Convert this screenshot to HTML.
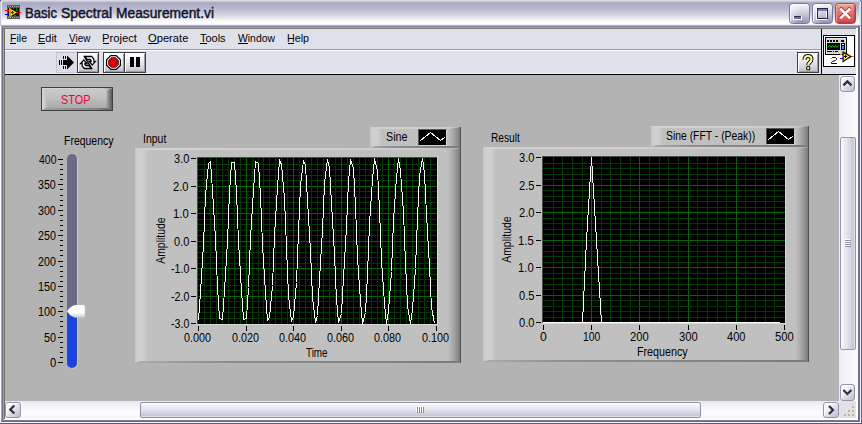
<!DOCTYPE html>
<html><head><meta charset="utf-8"><title>Basic Spectral Measurement.vi</title>
<style>
html,body{margin:0;padding:0;}
body{width:862px;height:424px;position:relative;overflow:hidden;background:#b3b3b3;font-family:"Liberation Sans",sans-serif;}
.t{position:absolute;white-space:nowrap;transform-origin:0 0;line-height:normal;}
div,svg{position:absolute;}
</style></head><body>

<div style="position:absolute;left:5px;top:75px;width:834px;height:326px;background:#b3b3b3;"></div>
<div style="left:0;top:0;width:862px;height:29px;background:linear-gradient(to bottom,#e4e4ec 0px,#d2d2e0 1px,#b6b6cc 2px,#a8a8c2 3px,#ababc4 4px,#b0b0c8 6px,#babace 9px,#c7c7d7 12px,#d6d6e2 15px,#e6e6ee 18px,#f4f4f8 20px,#ffffff 22px,#ffffff 24px,#e2e2ec 25px,#8a8aa8 26px,#76769a 27px,#a0a0a4 27.5px,#7e7e74 28px,#7e7e74 29px);"></div>
<div style="position:absolute;left:0px;top:2px;width:1px;height:24px;background:#c8c8dc;"></div>
<div style="position:absolute;left:1px;top:1px;width:1px;height:24px;background:#ececf4;"></div>
<div style="position:absolute;left:0px;top:0px;width:1px;height:1px;background:#5c5c88;"></div>
<div style="position:absolute;left:1px;top:0px;width:1px;height:1px;background:#a8a8c4;"></div>
<div style="position:absolute;left:0px;top:1px;width:1px;height:1px;background:#a8a8c4;"></div>
<div style="position:absolute;left:861px;top:2px;width:1px;height:24px;background:#6c6c92;"></div>
<div style="position:absolute;left:860px;top:1px;width:1px;height:24px;background:#e6e6f0;"></div>
<div style="position:absolute;left:859px;top:2px;width:1px;height:22px;background:linear-gradient(to bottom,#d0d0e0,#e8e8f0);"></div>
<div style="position:absolute;left:861px;top:0px;width:1px;height:1px;background:#7ab0f0;"></div>
<div style="position:absolute;left:860px;top:0px;width:1px;height:1px;background:#56649c;"></div>
<div style="position:absolute;left:861px;top:1px;width:1px;height:1px;background:#56649c;"></div>
<svg style="left:5px;top:5px" width="17" height="15" viewBox="0 0 17 15" shape-rendering="crispEdges">
<rect x="2" y="0" width="13" height="14" fill="#5a5a5a"/>
<g fill="#a4a4a4"><rect x="3" y="1" width="1" height="1"/><rect x="5" y="1" width="1" height="1"/><rect x="7" y="1" width="1" height="1"/><rect x="9" y="1" width="1" height="1"/><rect x="11" y="1" width="1" height="1"/><rect x="13" y="1" width="1" height="1"/>
<rect x="3" y="12" width="1" height="1"/><rect x="5" y="12" width="1" height="1"/><rect x="7" y="12" width="1" height="1"/><rect x="9" y="12" width="1" height="1"/><rect x="11" y="12" width="1" height="1"/><rect x="13" y="12" width="1" height="1"/></g>
<rect x="3" y="3" width="11" height="8" fill="#101010"/>
<rect x="8" y="3" width="1" height="1" fill="#008800"/><rect x="11" y="3" width="1" height="3" fill="#007000"/><rect x="12" y="4" width="1" height="2" fill="#007000"/><rect x="9" y="10" width="2" height="1" fill="#008800"/><rect x="12" y="9" width="1" height="1" fill="#007000"/>
<rect x="0" y="5" width="4" height="1" fill="#ff0000"/><rect x="0" y="9" width="4" height="1" fill="#0000ff"/><rect x="12" y="7" width="4" height="1" fill="#ff0000"/>
<polygon points="4,3 4,12 12,7.5" fill="#ffd800" shape-rendering="auto"/>
<polygon points="4,3 6,3.5 6,11.5 4,12" fill="#e8a000" shape-rendering="auto"/>
<rect x="7" y="6" width="1" height="3" fill="#303030"/><rect x="6" y="7" width="3" height="1" fill="#303030"/>
</svg>
<span class="t" style="left:24.63px;top:6.11px;font-size:13.8px;font-weight:normal;color:#14142a;transform:scaleX(0.9470);-webkit-text-stroke:0.45px #14142a;">Basic</span>
<span class="t" style="left:60.57px;top:6.11px;font-size:13.8px;font-weight:normal;color:#14142a;transform:scaleX(1.0104);-webkit-text-stroke:0.45px #14142a;">Spectral</span>
<span class="t" style="left:115.88px;top:6.11px;font-size:13.8px;font-weight:normal;color:#14142a;transform:scaleX(0.9981);-webkit-text-stroke:0.45px #14142a;">Measurement.vi</span>
<div style="left:789px;top:3px;width:19px;height:19px;border:1px solid #727a9e;border-radius:3.5px;background:linear-gradient(100deg,rgba(255,255,255,.55) 0%,rgba(255,255,255,0) 55%),linear-gradient(to bottom,#f6f6fb 0px,#e0e0ec 5px,#c2c2d8 11px,#a2a2c0 16px,#9494b6 19px);box-shadow:inset 1px 1px 0 rgba(255,255,255,.9);"></div>
<div style="left:812px;top:3px;width:19px;height:19px;border:1px solid #727a9e;border-radius:3.5px;background:linear-gradient(100deg,rgba(255,255,255,.55) 0%,rgba(255,255,255,0) 55%),linear-gradient(to bottom,#f6f6fb 0px,#e0e0ec 5px,#c2c2d8 11px,#a2a2c0 16px,#9494b6 19px);box-shadow:inset 1px 1px 0 rgba(255,255,255,.9);"></div>
<div style="left:835px;top:3px;width:19px;height:19px;border:1px solid #b83c46;border-radius:3.5px;background:linear-gradient(to bottom,#f8d8a8 0px,#f0a090 1.5px,#ec8484 4px,#e47070 9px,#d85858 15px,#cc4c4c 19px);box-shadow:inset 1px 0 0 rgba(255,190,170,.55),inset -1px -1px 0 rgba(170,40,40,.5);"></div>
<div style="position:absolute;left:793px;top:16px;width:9px;height:4px;background:#ffffff;"></div>
<div style="position:absolute;left:794px;top:16px;width:7px;height:3px;background:#6e6e96;"></div>
<div style="position:absolute;left:794px;top:16px;width:7px;height:1px;background:#2e2e4c;"></div>
<div style="left:816px;top:9px;width:9px;height:9px;border:1px solid #fff;"></div>
<div style="left:817px;top:8px;width:9px;height:9px;border:1px solid #26263e;background:linear-gradient(to bottom,#7c7ca6 0px,#7c7ca6 2px,rgba(0,0,0,0) 2px);"></div>
<svg style="left:835px;top:3px" width="21" height="21" viewBox="0 0 21 21">
<path d="M5.3 4.6 L15.2 14.5 M15.2 4.6 L5.3 14.5" stroke="#6a1c1c" stroke-width="2.6" fill="none" stroke-linecap="butt"/>
<path d="M5.3 5.5 L15.2 15.4 M15.2 5.5 L5.3 15.4" stroke="#fff" stroke-width="2.5" fill="none" stroke-linecap="butt"/></svg>
<div style="position:absolute;left:5px;top:29px;width:852px;height:45px;background:#dfe1ea;"></div>
<div style="position:absolute;left:5px;top:49px;width:816px;height:1px;background:#9c9ca0;"></div>
<div style="position:absolute;left:5px;top:50px;width:816px;height:1px;background:#ffffff;"></div>
<div style="position:absolute;left:5px;top:73px;width:816px;height:1px;background:#f2f2f8;"></div>
<div style="position:absolute;left:5px;top:74px;width:852px;height:1px;background:#000000;"></div>
<div style="position:absolute;left:821px;top:29px;width:1px;height:45px;background:#000000;"></div>
<span class="t" style="left:9.75px;top:31.30px;font-size:11.6px;font-weight:normal;color:#000;transform:scaleX(0.9101);">File</span>
<div style="position:absolute;left:10.3px;top:43px;width:6.0px;height:1px;background:#000;"></div>
<span class="t" style="left:37.71px;top:31.30px;font-size:11.6px;font-weight:normal;color:#000;transform:scaleX(0.9443);">Edit</span>
<div style="position:absolute;left:38.3px;top:43px;width:6.8px;height:1px;background:#000;"></div>
<span class="t" style="left:68.65px;top:31.30px;font-size:11.6px;font-weight:normal;color:#000;transform:scaleX(0.8541);">View</span>
<div style="position:absolute;left:68.4px;top:43px;width:7.3px;height:1px;background:#000;"></div>
<span class="t" style="left:101.89px;top:31.30px;font-size:11.6px;font-weight:normal;color:#000;transform:scaleX(0.9663);">Project</span>
<div style="position:absolute;left:102.5px;top:43px;width:6.8px;height:1px;background:#000;"></div>
<span class="t" style="left:148.21px;top:31.30px;font-size:11.6px;font-weight:normal;color:#000;transform:scaleX(0.9637);">Operate</span>
<div style="position:absolute;left:148.4px;top:43px;width:8.4px;height:1px;background:#000;"></div>
<span class="t" style="left:200.16px;top:31.30px;font-size:11.6px;font-weight:normal;color:#000;transform:scaleX(0.9434);">Tools</span>
<div style="position:absolute;left:200.1px;top:43px;width:7.0px;height:1px;background:#000;"></div>
<span class="t" style="left:237.94px;top:31.30px;font-size:11.6px;font-weight:normal;color:#000;transform:scaleX(0.8956);">Window</span>
<div style="position:absolute;left:237.7px;top:43px;width:10.5px;height:1px;background:#000;"></div>
<span class="t" style="left:287.03px;top:31.30px;font-size:11.6px;font-weight:normal;color:#000;transform:scaleX(0.9244);">Help</span>
<div style="position:absolute;left:287.6px;top:43px;width:6.8px;height:1px;background:#000;"></div>
<div style="left:56px;top:52px;width:20px;height:19px;border:1px solid #c6c7d2;background:#dcdde7;"></div>
<svg style="left:56px;top:52px" width="22" height="21" viewBox="56 52 22 21" shape-rendering="crispEdges">
<polygon points="67,55.5 74,62.5 67,69.5" fill="#000" shape-rendering="auto"/>
<rect x="63" y="60" width="5" height="5" fill="#000"/>
<rect x="59" y="60" width="1" height="5" fill="#000"/><rect x="61" y="60" width="1" height="5" fill="#000"/>
<rect x="63" y="56" width="1" height="3" fill="#000"/><rect x="65" y="56" width="1" height="3" fill="#000"/>
<rect x="63" y="66" width="1" height="3" fill="#000"/><rect x="65" y="66" width="1" height="3" fill="#000"/>
</svg>
<div style="left:77px;top:52px;width:20px;height:19px;border:1px solid #404044;background:linear-gradient(to bottom,#ffffff 0px,#f6f6fa 4px,#e6e6ee 10px,#d0d0da 16px,#b8b8c4 19px);box-shadow:inset 1px 1px 0 #ffffff,inset -1px -1px 0 #9a9aa6;"></div>
<svg style="left:77px;top:52px" width="22" height="21" viewBox="77 52 22 21">
<g stroke="#000" stroke-width="1.3" fill="#fff" stroke-linejoin="miter" transform="translate(88 0) scale(0.9 1) translate(-88 0)">
<path d="M84.5 56.5 L92 56.5 L94.5 59 L94.5 61.5 L96.2 61.5 L92.7 65 L89.2 61.5 L91.5 61.5 L91.5 60.5 L90.5 59.5 L87 59.5 Z"/>
<path d="M91.5 68.5 L84 68.5 L81.5 66 L81.5 63.5 L79.8 63.5 L83.3 60 L86.8 63.5 L84.5 63.5 L84.5 64.5 L85.5 65.5 L89 65.5 Z"/>
</g>
<path d="M84 56 L92 69" stroke="#000" stroke-width="1.4"/>
</svg>
<div style="left:103px;top:52px;width:20px;height:19px;border:1px solid #404044;background:linear-gradient(to bottom,#ffffff 0px,#f6f6fa 4px,#e6e6ee 10px,#d0d0da 16px,#b8b8c4 19px);box-shadow:inset 1px 1px 0 #ffffff,inset -1px -1px 0 #9a9aa6;"></div>
<svg style="left:103px;top:52px" width="22" height="21" viewBox="103 52 22 21">
<polygon points="110.5,55 116.5,55 121,59.5 121,65.5 116.5,70 110.5,70 106,65.5 106,59.5" fill="#000"/>
<polygon points="111,56.2 116,56.2 119.8,60 119.8,65 116,68.8 111,68.8 107.2,65 107.2,60" fill="#fff"/>
<polygon points="111.4,57.2 115.6,57.2 118.8,60.4 118.8,64.6 115.6,67.8 111.4,67.8 108.2,64.6 108.2,60.4" fill="#400000"/>
<polygon points="111.7,58 115.3,58 118,60.7 118,64.3 115.3,67 111.7,67 109,64.3 109,60.7" fill="#e00000"/>
</svg>
<div style="left:124px;top:52px;width:20px;height:19px;border:1px solid #404044;background:linear-gradient(to bottom,#ffffff 0px,#f6f6fa 4px,#e6e6ee 10px,#d0d0da 16px,#b8b8c4 19px);box-shadow:inset 1px 1px 0 #ffffff,inset -1px -1px 0 #9a9aa6;"></div>
<div style="position:absolute;left:130px;top:57px;width:4px;height:10px;background:#000;"></div>
<div style="position:absolute;left:136px;top:57px;width:4px;height:10px;background:#000;"></div>
<div style="left:797px;top:52px;width:20px;height:19px;border:1px solid #404044;background:linear-gradient(to bottom,#ffffff 0px,#f2f2f6 5px,#dcdce4 12px,#c0c0ca 19px);box-shadow:inset 1px 1px 0 #ffffff,inset -1px -1px 0 #9a9aa6;"></div>
<svg style="left:797px;top:52px" width="22" height="21" viewBox="797 52 22 21">
<path d="M804.5 60 Q804.5 56 808 56 Q811.5 56 811.5 59.3 Q811.5 61.3 809.6 62.6 Q808.2 63.6 808.2 65.2" stroke="#000" stroke-width="3.9" fill="none"/>
<path d="M804.5 60 Q804.5 56 808 56 Q811.5 56 811.5 59.3 Q811.5 61.3 809.6 62.6 Q808.2 63.6 808.2 65.2" stroke="#ffff88" stroke-width="2.1" fill="none"/>
<rect x="806.3" y="66.3" width="3.9" height="3.9" rx="0.8" fill="#000"/><rect x="807.2" y="67.2" width="2.1" height="2.1" fill="#ffff88"/>
</svg>
<div style="left:823px;top:35px;width:30px;height:30px;border:1px solid #000;background:#fff;"></div>
<svg style="left:823px;top:35px" width="32" height="32" viewBox="823 35 32 32" shape-rendering="crispEdges">
<rect x="825" y="37" width="22" height="18" fill="#000"/>
<rect x="826" y="38" width="20" height="16" fill="#d2d2d2"/>
<rect x="826" y="38" width="20" height="1" fill="#e8e8e8"/><rect x="826" y="38" width="1" height="16" fill="#e8e8e8"/>
<g fill="#000"><rect x="827" y="40" width="2" height="2"/><rect x="830" y="40" width="2" height="2"/><rect x="833" y="40" width="2" height="2"/><rect x="836" y="40" width="2" height="2"/><rect x="841" y="40" width="3" height="2"/>
<rect x="827" y="43" width="13" height="7"/><rect x="841" y="43" width="4" height="7"/>
<rect x="827" y="51" width="5" height="1"/><rect x="833" y="51" width="1" height="1"/><rect x="835" y="51" width="3" height="1"/></g>
<polyline points="828,47 829.5,45.5 831,47.5 832.5,45.5 834,47.5 835.5,45.5 837,47.5 838.5,45.5" stroke="#00c800" stroke-width="1" fill="none" shape-rendering="auto"/>
<rect x="842" y="44" width="2" height="1" fill="#fff"/><rect x="842" y="46" width="2" height="3" fill="#2090ff"/>
<rect x="840" y="54" width="2" height="1" fill="#ff6030"/><rect x="851" y="56" width="3" height="1" fill="#ff6030"/><rect x="840" y="58" width="3" height="1" fill="#0000ff"/>
<polygon points="842.5,51 842.5,62.5 852,56.5" fill="#000" shape-rendering="auto"/>
<polygon points="843.6,53.2 843.6,60.4 849.8,56.5" fill="#ffee00" shape-rendering="auto"/>
<rect x="845" y="55" width="1" height="3" fill="#000"/><rect x="844" y="56" width="3" height="1" fill="#000"/>
<path d="M831.5 58.5 L832.5 57.5 L835.5 57.5 L836.5 58.5 L836.5 59.5 L835.5 60.5 L832.5 61.5 L831.5 62.5 L831.5 63.5 L836.9 63.5" stroke="#000" stroke-width="1" fill="none" shape-rendering="auto"/>
</svg>
<div style="position:absolute;left:0px;top:26px;width:1px;height:396px;background:#ffffff;"></div>
<div style="position:absolute;left:1px;top:26px;width:1px;height:396px;background:#a6a6c2;"></div>
<div style="position:absolute;left:2px;top:26px;width:1px;height:396px;background:#72728c;"></div>
<div style="position:absolute;left:3px;top:28px;width:1px;height:390px;background:#9e9e9e;"></div>
<div style="position:absolute;left:4px;top:28px;width:1px;height:390px;background:#727264;"></div>
<div style="position:absolute;left:856px;top:28px;width:2px;height:392px;background:#fdfdf2;"></div>
<div style="position:absolute;left:858px;top:26px;width:2px;height:396px;background:#6c6c8c;"></div>
<div style="position:absolute;left:860px;top:26px;width:1px;height:397px;background:#f4f4fa;"></div>
<div style="position:absolute;left:861px;top:26px;width:1px;height:398px;background:#5c5c7c;"></div>
<div style="position:absolute;left:3px;top:418px;width:855px;height:2px;background:#fdfdf6;"></div>
<div style="position:absolute;left:1px;top:420px;width:859px;height:1px;background:#7a7a98;"></div>
<div style="position:absolute;left:1px;top:421px;width:859px;height:1px;background:#6a6a8a;"></div>
<div style="position:absolute;left:0px;top:422px;width:861px;height:1px;background:#f4f4fa;"></div>
<div style="position:absolute;left:0px;top:423px;width:862px;height:1px;background:#5c5c7c;"></div>
<div style="position:absolute;left:3px;top:418px;width:1px;height:2px;background:#9e9e9e;"></div>
<div style="position:absolute;left:4px;top:418px;width:1px;height:1px;background:#727264;"></div>
<div style="position:absolute;left:5px;top:401px;width:834px;height:17px;background:linear-gradient(to bottom,#e6e6ee 0px,#f2f2f8 4px,#fcfcfe 12px,#f4f4f8 17px);"></div>
<div style="position:absolute;left:839px;top:75px;width:17px;height:326px;background:linear-gradient(to right,#ebebf3 0px,#f4f4f8 8px,#fbfbfd 17px);"></div>
<div style="position:absolute;left:839px;top:401px;width:17px;height:17px;background:#e2e1e6;"></div>
<div style="left:5.2px;top:402px;width:14px;height:14px;border:1px solid #9294b0;border-radius:3px;background:linear-gradient(135deg,#ffffff 0%,#f0f0f6 35%,#d2d2e2 70%,#bcbcd2 100%);box-shadow:inset 1px 1px 0 #fff;"></div>
<div style="left:822.5px;top:402px;width:14px;height:14px;border:1px solid #9294b0;border-radius:3px;background:linear-gradient(135deg,#ffffff 0%,#f0f0f6 35%,#d2d2e2 70%,#bcbcd2 100%);box-shadow:inset 1px 1px 0 #fff;"></div>
<div style="left:840px;top:75.6px;width:13px;height:14px;border:1px solid #9294b0;border-radius:3px;background:linear-gradient(135deg,#ffffff 0%,#f0f0f6 35%,#d2d2e2 70%,#bcbcd2 100%);box-shadow:inset 1px 1px 0 #fff;"></div>
<div style="left:840px;top:384px;width:13px;height:15px;border:1px solid #9294b0;border-radius:3px;background:linear-gradient(135deg,#ffffff 0%,#f0f0f6 35%,#d2d2e2 70%,#bcbcd2 100%);box-shadow:inset 1px 1px 0 #fff;"></div>
<svg style="left:0;top:0" width="862" height="424" viewBox="0 0 862 424"><path d="M14.3 405.5 L10.3 409.5 L14.3 413.5" stroke="#303030" stroke-width="2.2" fill="none"/></svg>
<svg style="left:0;top:0" width="862" height="424" viewBox="0 0 862 424"><path d="M829 406 L833 410 L829 414" stroke="#303030" stroke-width="2.2" fill="none"/></svg>
<svg style="left:0;top:0" width="862" height="424" viewBox="0 0 862 424"><path d="M843.4 85.4 L847.4 81.4 L851.4 85.4" stroke="#303030" stroke-width="2.2" fill="none"/></svg>
<svg style="left:0;top:0" width="862" height="424" viewBox="0 0 862 424"><path d="M843.4 390 L847.4 394 L851.4 390" stroke="#303030" stroke-width="2.2" fill="none"/></svg>
<div style="position:absolute;left:140px;top:401px;width:561px;height:1px;background:#f4f4ea;"></div>
<div style="left:140px;top:402px;width:559px;height:14px;border:1px solid #8e90a8;border-radius:2px;background:linear-gradient(to bottom,#ffffff 0px,#f2f2f6 2px,#e6e6ee 6px,#d0d0e0 11px,#c6c6da 13px,#ffffff 14px);"></div>
<div style="position:absolute;left:416px;top:406px;width:1px;height:6px;background:#ffffff;"></div>
<div style="position:absolute;left:417px;top:407px;width:1px;height:6px;background:#8c8ea8;"></div>
<div style="position:absolute;left:418px;top:406px;width:1px;height:6px;background:#ffffff;"></div>
<div style="position:absolute;left:419px;top:407px;width:1px;height:6px;background:#8c8ea8;"></div>
<div style="position:absolute;left:420px;top:406px;width:1px;height:6px;background:#ffffff;"></div>
<div style="position:absolute;left:421px;top:407px;width:1px;height:6px;background:#8c8ea8;"></div>
<div style="position:absolute;left:422px;top:406px;width:1px;height:6px;background:#ffffff;"></div>
<div style="position:absolute;left:423px;top:407px;width:1px;height:6px;background:#8c8ea8;"></div>
<div style="position:absolute;left:839px;top:137px;width:1px;height:213px;background:#f4f4ea;"></div>
<div style="position:absolute;left:856px;top:75px;width:1px;height:326px;background:#f8f8ee;"></div>
<div style="left:840px;top:137px;width:14px;height:211px;border:1px solid #9294ae;border-radius:2px;background:linear-gradient(to right,#ffffff 0px,#f0f0f5 2px,#e4e4ec 6px,#ccccdc 11px,#c6c6da 13px,#fff 14px);"></div>
<div style="position:absolute;left:844px;top:239px;width:6px;height:1px;background:#ffffff;"></div>
<div style="position:absolute;left:845px;top:240px;width:6px;height:1px;background:#8c8ea8;"></div>
<div style="position:absolute;left:844px;top:241px;width:6px;height:1px;background:#ffffff;"></div>
<div style="position:absolute;left:845px;top:242px;width:6px;height:1px;background:#8c8ea8;"></div>
<div style="position:absolute;left:844px;top:243px;width:6px;height:1px;background:#ffffff;"></div>
<div style="position:absolute;left:845px;top:244px;width:6px;height:1px;background:#8c8ea8;"></div>
<div style="position:absolute;left:844px;top:245px;width:6px;height:1px;background:#ffffff;"></div>
<div style="position:absolute;left:845px;top:246px;width:6px;height:1px;background:#8c8ea8;"></div>
<div style="position:absolute;left:852px;top:406px;width:2px;height:2px;background:#b8b49c;"></div>
<div style="position:absolute;left:848px;top:410px;width:2px;height:2px;background:#b8b49c;"></div>
<div style="position:absolute;left:852px;top:410px;width:2px;height:2px;background:#b8b49c;"></div>
<div style="position:absolute;left:844px;top:414px;width:2px;height:2px;background:#b8b49c;"></div>
<div style="position:absolute;left:848px;top:414px;width:2px;height:2px;background:#b8b49c;"></div>
<div style="position:absolute;left:852px;top:414px;width:2px;height:2px;background:#b8b49c;"></div>
<div style="left:41px;top:87px;width:70px;height:22px;border:1px solid #404040;background:linear-gradient(to bottom,#cacaca 0px,#c2c2c2 8px,#b2b2b2 16px,#a8a8a8 22px);"></div>
<div style="position:absolute;left:42px;top:88px;width:5px;height:22px;background:linear-gradient(to right,#d8d8d8,#c6c6c6 70%,rgba(198,198,198,0));clip-path:polygon(0 0,100% 14%,100% 90%,0 100%);"></div>
<div style="position:absolute;left:106px;top:88px;width:6px;height:22px;background:linear-gradient(to right,rgba(170,170,170,0),#8c8c8c 40%,#5a5a5a);clip-path:polygon(100% 0,0 14%,0 90%,100% 100%);"></div>
<div style="position:absolute;left:42px;top:88px;width:70px;height:1px;background:linear-gradient(to right,#d8d8d8,#cccccc 85%,#909090);"></div>
<div style="position:absolute;left:42px;top:108px;width:70px;height:2px;background:linear-gradient(to right,#a0a0a0,#808080 80%,#606060);clip-path:polygon(0 100%,100% 100%,93% 0,6% 0);"></div>
<span class="t" style="left:61.43px;top:92.23px;font-size:13px;font-weight:normal;color:#f0003c;transform:scaleX(0.8398);">STOP</span>
<span class="t" style="left:63.53px;top:133.02px;font-size:12.8px;font-weight:normal;color:#000;transform:scaleX(0.8177);">Frequency</span>
<div style="left:67px;top:154px;width:10px;height:214px;border-radius:5px;background:linear-gradient(to bottom,#6b6b86 0px,#6b6b86 157px,#1c44e0 157px,#1c44e0 214px);box-shadow:1px 1px 0 #c8c8c8;"></div>
<div style="position:absolute;left:58px;top:362px;width:5px;height:1px;background:#000;"></div>
<div style="position:absolute;left:60px;top:357px;width:3px;height:1px;background:#000;"></div>
<div style="position:absolute;left:60px;top:352px;width:3px;height:1px;background:#000;"></div>
<div style="position:absolute;left:60px;top:347px;width:3px;height:1px;background:#000;"></div>
<div style="position:absolute;left:60px;top:342px;width:3px;height:1px;background:#000;"></div>
<div style="position:absolute;left:58px;top:337px;width:5px;height:1px;background:#000;"></div>
<div style="position:absolute;left:60px;top:332px;width:3px;height:1px;background:#000;"></div>
<div style="position:absolute;left:60px;top:326px;width:3px;height:1px;background:#000;"></div>
<div style="position:absolute;left:60px;top:321px;width:3px;height:1px;background:#000;"></div>
<div style="position:absolute;left:60px;top:316px;width:3px;height:1px;background:#000;"></div>
<div style="position:absolute;left:58px;top:311px;width:5px;height:1px;background:#000;"></div>
<div style="position:absolute;left:60px;top:306px;width:3px;height:1px;background:#000;"></div>
<div style="position:absolute;left:60px;top:301px;width:3px;height:1px;background:#000;"></div>
<div style="position:absolute;left:60px;top:296px;width:3px;height:1px;background:#000;"></div>
<div style="position:absolute;left:60px;top:291px;width:3px;height:1px;background:#000;"></div>
<div style="position:absolute;left:58px;top:286px;width:5px;height:1px;background:#000;"></div>
<div style="position:absolute;left:60px;top:281px;width:3px;height:1px;background:#000;"></div>
<div style="position:absolute;left:60px;top:276px;width:3px;height:1px;background:#000;"></div>
<div style="position:absolute;left:60px;top:271px;width:3px;height:1px;background:#000;"></div>
<div style="position:absolute;left:60px;top:266px;width:3px;height:1px;background:#000;"></div>
<div style="position:absolute;left:58px;top:261px;width:5px;height:1px;background:#000;"></div>
<div style="position:absolute;left:60px;top:255px;width:3px;height:1px;background:#000;"></div>
<div style="position:absolute;left:60px;top:250px;width:3px;height:1px;background:#000;"></div>
<div style="position:absolute;left:60px;top:245px;width:3px;height:1px;background:#000;"></div>
<div style="position:absolute;left:60px;top:240px;width:3px;height:1px;background:#000;"></div>
<div style="position:absolute;left:58px;top:235px;width:5px;height:1px;background:#000;"></div>
<div style="position:absolute;left:60px;top:230px;width:3px;height:1px;background:#000;"></div>
<div style="position:absolute;left:60px;top:225px;width:3px;height:1px;background:#000;"></div>
<div style="position:absolute;left:60px;top:220px;width:3px;height:1px;background:#000;"></div>
<div style="position:absolute;left:60px;top:215px;width:3px;height:1px;background:#000;"></div>
<div style="position:absolute;left:58px;top:210px;width:5px;height:1px;background:#000;"></div>
<div style="position:absolute;left:60px;top:205px;width:3px;height:1px;background:#000;"></div>
<div style="position:absolute;left:60px;top:200px;width:3px;height:1px;background:#000;"></div>
<div style="position:absolute;left:60px;top:195px;width:3px;height:1px;background:#000;"></div>
<div style="position:absolute;left:60px;top:189px;width:3px;height:1px;background:#000;"></div>
<div style="position:absolute;left:58px;top:184px;width:5px;height:1px;background:#000;"></div>
<div style="position:absolute;left:60px;top:179px;width:3px;height:1px;background:#000;"></div>
<div style="position:absolute;left:60px;top:174px;width:3px;height:1px;background:#000;"></div>
<div style="position:absolute;left:60px;top:169px;width:3px;height:1px;background:#000;"></div>
<div style="position:absolute;left:60px;top:164px;width:3px;height:1px;background:#000;"></div>
<div style="position:absolute;left:58px;top:159px;width:5px;height:1px;background:#000;"></div>
<span class="t" style="left:49.76px;top:354.82px;font-size:12.8px;font-weight:normal;color:#000;transform:scaleX(0.8816);">0</span>
<span class="t" style="left:43.98px;top:329.82px;font-size:12.8px;font-weight:normal;color:#000;transform:scaleX(0.8453);">50</span>
<span class="t" style="left:37.91px;top:303.82px;font-size:12.8px;font-weight:normal;color:#000;transform:scaleX(0.8476);">100</span>
<span class="t" style="left:37.91px;top:278.82px;font-size:12.8px;font-weight:normal;color:#000;transform:scaleX(0.8476);">150</span>
<span class="t" style="left:38.18px;top:253.82px;font-size:12.8px;font-weight:normal;color:#000;transform:scaleX(0.8346);">200</span>
<span class="t" style="left:38.18px;top:227.82px;font-size:12.8px;font-weight:normal;color:#000;transform:scaleX(0.8346);">250</span>
<span class="t" style="left:38.29px;top:202.82px;font-size:12.8px;font-weight:normal;color:#000;transform:scaleX(0.8294);">300</span>
<span class="t" style="left:38.29px;top:176.82px;font-size:12.8px;font-weight:normal;color:#000;transform:scaleX(0.8294);">350</span>
<span class="t" style="left:38.50px;top:151.82px;font-size:12.8px;font-weight:normal;color:#000;transform:scaleX(0.8194);">400</span>
<svg style="left:66px;top:304px" width="21" height="15" viewBox="66 304 21 15">
<defs><linearGradient id="tg" x1="0" y1="0" x2="0" y2="1"><stop offset="0" stop-color="#ffffff"/><stop offset="0.6" stop-color="#ffffff"/><stop offset="1" stop-color="#c8c8c8"/></linearGradient></defs>
<path d="M67 311.3 Q70 306.2 75.5 305 L83 305 Q84.9 305 84.9 307 L84.9 315.8 Q84.9 317.8 83 317.8 L75.5 317.8 Q70 316.4 67 311.3 Z" fill="url(#tg)"/>
</svg>
<div style="position:absolute;left:134.5px;top:148px;width:326.5px;height:215px;background:#c0c0c0;"></div><div style="position:absolute;left:134.5px;top:148px;width:12px;height:215px;background:linear-gradient(to right,#c6c6c6 0px,#d0d0d0 3px,#cecece 70%,#c4c4c4 100%);"></div><div style="position:absolute;left:448.0px;top:148px;width:13px;height:215px;background:linear-gradient(to right,#bebebe 0px,#b0b0b0 25%,#9c9c9c 55%,#868686 80%,#787878 100%);"></div><div style="position:absolute;left:460.0px;top:148px;width:1px;height:215px;background:#505050;"></div><div style="position:absolute;left:134.5px;top:148px;width:326.5px;height:2px;background:linear-gradient(to right,#d2d2d2 0px,#cccccc 90%,#b0b0b0 100%);clip-path:polygon(0 0,100% 0,313.5px 100%,4px 100%);"></div><div style="position:absolute;left:134.5px;top:361px;width:326.5px;height:2px;background:linear-gradient(to right,#acacac 0px,#8e8e8e 25%,#7c7c7c 100%);clip-path:polygon(0 100%,100% 100%,100% 0,6px 0);"></div><div style="position:absolute;left:460.0px;top:148px;width:1px;height:215px;background:#505050;"></div>
<div style="position:absolute;left:370px;top:127px;width:91px;height:21px;background:#c0c0c0;"></div><div style="position:absolute;left:370px;top:127px;width:11px;height:21px;background:linear-gradient(to right,#c6c6c6 0px,#d0d0d0 3px,#cecece 70%,#c4c4c4 100%);"></div><div style="position:absolute;left:448px;top:127px;width:13px;height:21px;background:linear-gradient(to right,#bebebe 0px,#b0b0b0 25%,#9c9c9c 55%,#868686 80%,#787878 100%);"></div><div style="position:absolute;left:460px;top:127px;width:1px;height:21px;background:#505050;"></div><div style="position:absolute;left:370px;top:127px;width:91px;height:2px;background:linear-gradient(to right,#d2d2d2 0px,#cccccc 90%,#b0b0b0 100%);clip-path:polygon(0 0,100% 0,78px 100%,3px 100%);"></div><div style="position:absolute;left:370px;top:146px;width:91px;height:2px;background:linear-gradient(to right,#acacac 0px,#8e8e8e 25%,#7c7c7c 100%);clip-path:polygon(0 100%,100% 100%,100% 0,5px 0);"></div><div style="position:absolute;left:460px;top:127px;width:1px;height:21px;background:#505050;"></div>
<div style="position:absolute;left:482.5px;top:147px;width:326.5px;height:215px;background:#c0c0c0;"></div><div style="position:absolute;left:482.5px;top:147px;width:12px;height:215px;background:linear-gradient(to right,#c6c6c6 0px,#d0d0d0 3px,#cecece 70%,#c4c4c4 100%);"></div><div style="position:absolute;left:796.0px;top:147px;width:13px;height:215px;background:linear-gradient(to right,#bebebe 0px,#b0b0b0 25%,#9c9c9c 55%,#868686 80%,#787878 100%);"></div><div style="position:absolute;left:808.0px;top:147px;width:1px;height:215px;background:#505050;"></div><div style="position:absolute;left:482.5px;top:147px;width:326.5px;height:2px;background:linear-gradient(to right,#d2d2d2 0px,#cccccc 90%,#b0b0b0 100%);clip-path:polygon(0 0,100% 0,313.5px 100%,4px 100%);"></div><div style="position:absolute;left:482.5px;top:360px;width:326.5px;height:2px;background:linear-gradient(to right,#acacac 0px,#8e8e8e 25%,#7c7c7c 100%);clip-path:polygon(0 100%,100% 100%,100% 0,6px 0);"></div><div style="position:absolute;left:808.0px;top:147px;width:1px;height:215px;background:#505050;"></div>
<div style="position:absolute;left:651px;top:126px;width:158px;height:21px;background:#c0c0c0;"></div><div style="position:absolute;left:651px;top:126px;width:11px;height:21px;background:linear-gradient(to right,#c6c6c6 0px,#d0d0d0 3px,#cecece 70%,#c4c4c4 100%);"></div><div style="position:absolute;left:796px;top:126px;width:13px;height:21px;background:linear-gradient(to right,#bebebe 0px,#b0b0b0 25%,#9c9c9c 55%,#868686 80%,#787878 100%);"></div><div style="position:absolute;left:808px;top:126px;width:1px;height:21px;background:#505050;"></div><div style="position:absolute;left:651px;top:126px;width:158px;height:2px;background:linear-gradient(to right,#d2d2d2 0px,#cccccc 90%,#b0b0b0 100%);clip-path:polygon(0 0,100% 0,145px 100%,3px 100%);"></div><div style="position:absolute;left:651px;top:145px;width:158px;height:2px;background:linear-gradient(to right,#acacac 0px,#8e8e8e 25%,#7c7c7c 100%);clip-path:polygon(0 100%,100% 100%,100% 0,5px 0);"></div><div style="position:absolute;left:808px;top:126px;width:1px;height:21px;background:#505050;"></div>
<svg style="left:197px;top:157px" width="241" height="167" viewBox="197 157 241 167" shape-rendering="crispEdges"><rect x="197" y="157" width="241" height="167" fill="#000"/><rect x="204" y="157" width="1" height="167" fill="#003a00"/><rect x="210" y="157" width="1" height="167" fill="#003a00"/><rect x="216" y="157" width="1" height="167" fill="#003a00"/><rect x="222" y="157" width="1" height="167" fill="#003a00"/><rect x="228" y="157" width="1" height="167" fill="#003a00"/><rect x="234" y="157" width="1" height="167" fill="#003a00"/><rect x="240" y="157" width="1" height="167" fill="#003a00"/><rect x="252" y="157" width="1" height="167" fill="#003a00"/><rect x="258" y="157" width="1" height="167" fill="#003a00"/><rect x="263" y="157" width="1" height="167" fill="#003a00"/><rect x="269" y="157" width="1" height="167" fill="#003a00"/><rect x="275" y="157" width="1" height="167" fill="#003a00"/><rect x="281" y="157" width="1" height="167" fill="#003a00"/><rect x="287" y="157" width="1" height="167" fill="#003a00"/><rect x="299" y="157" width="1" height="167" fill="#003a00"/><rect x="305" y="157" width="1" height="167" fill="#003a00"/><rect x="311" y="157" width="1" height="167" fill="#003a00"/><rect x="317" y="157" width="1" height="167" fill="#003a00"/><rect x="323" y="157" width="1" height="167" fill="#003a00"/><rect x="329" y="157" width="1" height="167" fill="#003a00"/><rect x="335" y="157" width="1" height="167" fill="#003a00"/><rect x="347" y="157" width="1" height="167" fill="#003a00"/><rect x="353" y="157" width="1" height="167" fill="#003a00"/><rect x="359" y="157" width="1" height="167" fill="#003a00"/><rect x="365" y="157" width="1" height="167" fill="#003a00"/><rect x="371" y="157" width="1" height="167" fill="#003a00"/><rect x="377" y="157" width="1" height="167" fill="#003a00"/><rect x="382" y="157" width="1" height="167" fill="#003a00"/><rect x="394" y="157" width="1" height="167" fill="#003a00"/><rect x="400" y="157" width="1" height="167" fill="#003a00"/><rect x="406" y="157" width="1" height="167" fill="#003a00"/><rect x="412" y="157" width="1" height="167" fill="#003a00"/><rect x="418" y="157" width="1" height="167" fill="#003a00"/><rect x="424" y="157" width="1" height="167" fill="#003a00"/><rect x="430" y="157" width="1" height="167" fill="#003a00"/><rect x="197" y="164" width="241" height="1" fill="#003a00"/><rect x="197" y="169" width="241" height="1" fill="#003a00"/><rect x="197" y="175" width="241" height="1" fill="#003a00"/><rect x="197" y="180" width="241" height="1" fill="#003a00"/><rect x="197" y="191" width="241" height="1" fill="#003a00"/><rect x="197" y="197" width="241" height="1" fill="#003a00"/><rect x="197" y="202" width="241" height="1" fill="#003a00"/><rect x="197" y="208" width="241" height="1" fill="#003a00"/><rect x="197" y="219" width="241" height="1" fill="#003a00"/><rect x="197" y="224" width="241" height="1" fill="#003a00"/><rect x="197" y="230" width="241" height="1" fill="#003a00"/><rect x="197" y="235" width="241" height="1" fill="#003a00"/><rect x="197" y="246" width="241" height="1" fill="#003a00"/><rect x="197" y="252" width="241" height="1" fill="#003a00"/><rect x="197" y="257" width="241" height="1" fill="#003a00"/><rect x="197" y="263" width="241" height="1" fill="#003a00"/><rect x="197" y="274" width="241" height="1" fill="#003a00"/><rect x="197" y="279" width="241" height="1" fill="#003a00"/><rect x="197" y="285" width="241" height="1" fill="#003a00"/><rect x="197" y="290" width="241" height="1" fill="#003a00"/><rect x="197" y="301" width="241" height="1" fill="#003a00"/><rect x="197" y="307" width="241" height="1" fill="#003a00"/><rect x="197" y="312" width="241" height="1" fill="#003a00"/><rect x="197" y="318" width="241" height="1" fill="#003a00"/><rect x="246" y="157" width="1" height="167" fill="#006600"/><rect x="293" y="157" width="1" height="167" fill="#006600"/><rect x="341" y="157" width="1" height="167" fill="#006600"/><rect x="388" y="157" width="1" height="167" fill="#006600"/><rect x="197" y="186" width="241" height="1" fill="#006600"/><rect x="197" y="213" width="241" height="1" fill="#006600"/><rect x="197" y="241" width="241" height="1" fill="#006600"/><rect x="197" y="268" width="241" height="1" fill="#006600"/><rect x="197" y="296" width="241" height="1" fill="#006600"/><polyline points="198.5,320.5 200.5,292.5 203.5,244.5 205.5,195.5 208.5,163.5 210.5,161.5 212.5,190.5 215.5,238.5 217.5,287.5 219.5,318.5 222.5,319.5 224.5,290.5 227.5,241.5 229.5,192.5 231.5,162.5 234.5,162.5 236.5,192.5 238.5,241.5 241.5,290.5 243.5,319.5 246.5,318.5 248.5,287.5 250.5,238.5 253.5,190.5 255.5,161.5 258.5,163.5 260.5,195.5 262.5,244.5 265.5,292.5 267.5,320.5 269.5,317.5 272.5,285.5 274.5,235.5 277.5,187.5 279.5,160.5 281.5,164.5 284.5,198.5 286.5,247.5 288.5,295.5 291.5,321.5 293.5,316.5 296.5,282.5 298.5,232.5 300.5,185.5 303.5,160.5 305.5,165.5 307.5,200.5 310.5,251.5 312.5,297.5 315.5,322.5 317.5,315.5 319.5,279.5 322.5,229.5 324.5,183.5 327.5,159.5 329.5,167.5 331.5,203.5 334.5,254.5 336.5,299.5 338.5,322.5 341.5,313.5 343.5,277.5 346.5,226.5 348.5,181.5 350.5,159.5 353.5,168.5 355.5,206.5 357.5,257.5 360.5,301.5 362.5,323.5 365.5,312.5 367.5,274.5 369.5,223.5 372.5,179.5 374.5,158.5 377.5,170.5 379.5,209.5 381.5,260.5 384.5,303.5 386.5,323.5 388.5,310.5 391.5,271.5 393.5,220.5 396.5,177.5 398.5,158.5 400.5,171.5 403.5,212.5 405.5,263.5 407.5,305.5 410.5,323.5 412.5,309.5 415.5,268.5 417.5,217.5 419.5,175.5 422.5,158.5 424.5,173.5 426.5,214.5 429.5,266.5 431.5,307.5 434.5,323.5" stroke="#fff" stroke-width="1" fill="none" stroke-linejoin="miter"/><rect x="197" y="157" width="241" height="1" fill="#4a4a4a"/><rect x="197" y="157" width="1" height="167" fill="#4a4a4a"/></svg>
<div style="position:absolute;left:197px;top:324px;width:241px;height:1px;background:#d8d8d8;"></div>
<div style="position:absolute;left:437px;top:157px;width:1px;height:168px;background:#d8d8d8;"></div>
<div style="position:absolute;left:198px;top:326px;width:1px;height:5px;background:#000;"></div>
<div style="position:absolute;left:246px;top:326px;width:1px;height:5px;background:#000;"></div>
<div style="position:absolute;left:293px;top:326px;width:1px;height:5px;background:#000;"></div>
<div style="position:absolute;left:341px;top:326px;width:1px;height:5px;background:#000;"></div>
<div style="position:absolute;left:388px;top:326px;width:1px;height:5px;background:#000;"></div>
<div style="position:absolute;left:436px;top:326px;width:1px;height:5px;background:#000;"></div>
<div style="position:absolute;left:191px;top:158px;width:5px;height:1px;background:#000;"></div>
<div style="position:absolute;left:191px;top:186px;width:5px;height:1px;background:#000;"></div>
<div style="position:absolute;left:191px;top:213px;width:5px;height:1px;background:#000;"></div>
<div style="position:absolute;left:191px;top:241px;width:5px;height:1px;background:#000;"></div>
<div style="position:absolute;left:191px;top:268px;width:5px;height:1px;background:#000;"></div>
<div style="position:absolute;left:191px;top:296px;width:5px;height:1px;background:#000;"></div>
<div style="position:absolute;left:191px;top:323px;width:5px;height:1px;background:#000;"></div>
<span class="t" style="left:173.57px;top:150.82px;font-size:12.8px;font-weight:normal;color:#000;transform:scaleX(0.8625);">3.0</span>
<span class="t" style="left:173.46px;top:178.82px;font-size:12.8px;font-weight:normal;color:#000;transform:scaleX(0.8689);">2.0</span>
<span class="t" style="left:173.17px;top:205.82px;font-size:12.8px;font-weight:normal;color:#000;transform:scaleX(0.8855);">1.0</span>
<span class="t" style="left:173.57px;top:233.82px;font-size:12.8px;font-weight:normal;color:#000;transform:scaleX(0.8625);">0.0</span>
<span class="t" style="left:170.53px;top:260.82px;font-size:12.8px;font-weight:normal;color:#000;transform:scaleX(0.8333);">-1.0</span>
<span class="t" style="left:170.53px;top:288.82px;font-size:12.8px;font-weight:normal;color:#000;transform:scaleX(0.8333);">-2.0</span>
<span class="t" style="left:170.53px;top:315.82px;font-size:12.8px;font-weight:normal;color:#000;transform:scaleX(0.8333);">-3.0</span>
<span class="t" style="left:183.98px;top:330.02px;font-size:12.8px;font-weight:normal;color:#000;transform:scaleX(0.8435);">0.000</span>
<span class="t" style="left:231.98px;top:330.02px;font-size:12.8px;font-weight:normal;color:#000;transform:scaleX(0.8435);">0.020</span>
<span class="t" style="left:278.98px;top:330.02px;font-size:12.8px;font-weight:normal;color:#000;transform:scaleX(0.8435);">0.040</span>
<span class="t" style="left:326.98px;top:330.02px;font-size:12.8px;font-weight:normal;color:#000;transform:scaleX(0.8435);">0.060</span>
<span class="t" style="left:373.98px;top:330.02px;font-size:12.8px;font-weight:normal;color:#000;transform:scaleX(0.8435);">0.080</span>
<span class="t" style="left:421.98px;top:330.02px;font-size:12.8px;font-weight:normal;color:#000;transform:scaleX(0.8435);">0.100</span>
<span class="t" style="left:305.81px;top:345.42px;font-size:12.8px;font-weight:normal;color:#000;transform:scaleX(0.7724);">Time</span>
<span class="t" style="left:0;top:0;font-size:12.8px;transform-origin:0 0;transform:translate(153.12px,263.80px) rotate(-90deg) scaleX(0.8151);">Amplitude</span>
<span class="t" style="left:142.62px;top:131.42px;font-size:12.8px;font-weight:normal;color:#000;transform:scaleX(0.8220);">Input</span>
<span class="t" style="left:385.53px;top:129.02px;font-size:12.8px;font-weight:normal;color:#000;transform:scaleX(0.8367);">Sine</span>
<div style="position:absolute;left:418px;top:129px;width:29px;height:17px;background:#000;border:1px solid #d0d0d0;border-top-color:#585858;border-left-color:#585858;box-sizing:border-box;"></div>
<svg style="left:418px;top:129px" width="29" height="17" viewBox="418 129 29 17"><polyline points="420.5,140.5 430.5,132.5 440.5,140.5 445.4,136.8" stroke="#fff" stroke-width="1" fill="none" shape-rendering="crispEdges"/></svg>
<svg style="left:542px;top:156px" width="244" height="167" viewBox="542 156 244 167" shape-rendering="crispEdges"><rect x="542" y="156" width="244" height="167" fill="#000"/><rect x="553" y="156" width="1" height="167" fill="#003a00"/><rect x="562" y="156" width="1" height="167" fill="#003a00"/><rect x="572" y="156" width="1" height="167" fill="#003a00"/><rect x="582" y="156" width="1" height="167" fill="#003a00"/><rect x="601" y="156" width="1" height="167" fill="#003a00"/><rect x="610" y="156" width="1" height="167" fill="#003a00"/><rect x="620" y="156" width="1" height="167" fill="#003a00"/><rect x="630" y="156" width="1" height="167" fill="#003a00"/><rect x="649" y="156" width="1" height="167" fill="#003a00"/><rect x="659" y="156" width="1" height="167" fill="#003a00"/><rect x="668" y="156" width="1" height="167" fill="#003a00"/><rect x="678" y="156" width="1" height="167" fill="#003a00"/><rect x="697" y="156" width="1" height="167" fill="#003a00"/><rect x="707" y="156" width="1" height="167" fill="#003a00"/><rect x="717" y="156" width="1" height="167" fill="#003a00"/><rect x="726" y="156" width="1" height="167" fill="#003a00"/><rect x="745" y="156" width="1" height="167" fill="#003a00"/><rect x="755" y="156" width="1" height="167" fill="#003a00"/><rect x="765" y="156" width="1" height="167" fill="#003a00"/><rect x="774" y="156" width="1" height="167" fill="#003a00"/><rect x="542" y="163" width="244" height="1" fill="#003a00"/><rect x="542" y="168" width="244" height="1" fill="#003a00"/><rect x="542" y="174" width="244" height="1" fill="#003a00"/><rect x="542" y="179" width="244" height="1" fill="#003a00"/><rect x="542" y="190" width="244" height="1" fill="#003a00"/><rect x="542" y="196" width="244" height="1" fill="#003a00"/><rect x="542" y="201" width="244" height="1" fill="#003a00"/><rect x="542" y="207" width="244" height="1" fill="#003a00"/><rect x="542" y="218" width="244" height="1" fill="#003a00"/><rect x="542" y="223" width="244" height="1" fill="#003a00"/><rect x="542" y="229" width="244" height="1" fill="#003a00"/><rect x="542" y="234" width="244" height="1" fill="#003a00"/><rect x="542" y="245" width="244" height="1" fill="#003a00"/><rect x="542" y="251" width="244" height="1" fill="#003a00"/><rect x="542" y="256" width="244" height="1" fill="#003a00"/><rect x="542" y="262" width="244" height="1" fill="#003a00"/><rect x="542" y="273" width="244" height="1" fill="#003a00"/><rect x="542" y="278" width="244" height="1" fill="#003a00"/><rect x="542" y="284" width="244" height="1" fill="#003a00"/><rect x="542" y="289" width="244" height="1" fill="#003a00"/><rect x="542" y="300" width="244" height="1" fill="#003a00"/><rect x="542" y="306" width="244" height="1" fill="#003a00"/><rect x="542" y="311" width="244" height="1" fill="#003a00"/><rect x="542" y="317" width="244" height="1" fill="#003a00"/><rect x="591" y="156" width="1" height="167" fill="#006600"/><rect x="639" y="156" width="1" height="167" fill="#006600"/><rect x="688" y="156" width="1" height="167" fill="#006600"/><rect x="736" y="156" width="1" height="167" fill="#006600"/><rect x="542" y="185" width="244" height="1" fill="#006600"/><rect x="542" y="212" width="244" height="1" fill="#006600"/><rect x="542" y="240" width="244" height="1" fill="#006600"/><rect x="542" y="267" width="244" height="1" fill="#006600"/><rect x="542" y="295" width="244" height="1" fill="#006600"/><polyline points="543.5,322.5 582.5,322.5 586.5,240.5 591.5,157.5 596.5,240.5 601.5,322.5 779.5,322.5" stroke="#fff" stroke-width="1" fill="none" stroke-linejoin="miter"/><rect x="542" y="156" width="244" height="1" fill="#4a4a4a"/><rect x="542" y="156" width="1" height="167" fill="#4a4a4a"/></svg>
<div style="position:absolute;left:542px;top:323px;width:244px;height:1px;background:#d8d8d8;"></div>
<div style="position:absolute;left:785px;top:156px;width:1px;height:168px;background:#d8d8d8;"></div>
<div style="position:absolute;left:543px;top:322px;width:237px;height:1px;background:#fff;"></div>
<div style="position:absolute;left:543px;top:325px;width:1px;height:5px;background:#000;"></div>
<div style="position:absolute;left:591px;top:325px;width:1px;height:5px;background:#000;"></div>
<div style="position:absolute;left:639px;top:325px;width:1px;height:5px;background:#000;"></div>
<div style="position:absolute;left:688px;top:325px;width:1px;height:5px;background:#000;"></div>
<div style="position:absolute;left:736px;top:325px;width:1px;height:5px;background:#000;"></div>
<div style="position:absolute;left:784px;top:325px;width:1px;height:5px;background:#000;"></div>
<div style="position:absolute;left:536px;top:157px;width:5px;height:1px;background:#000;"></div>
<div style="position:absolute;left:536px;top:185px;width:5px;height:1px;background:#000;"></div>
<div style="position:absolute;left:536px;top:212px;width:5px;height:1px;background:#000;"></div>
<div style="position:absolute;left:536px;top:240px;width:5px;height:1px;background:#000;"></div>
<div style="position:absolute;left:536px;top:267px;width:5px;height:1px;background:#000;"></div>
<div style="position:absolute;left:536px;top:295px;width:5px;height:1px;background:#000;"></div>
<div style="position:absolute;left:536px;top:322px;width:5px;height:1px;background:#000;"></div>
<span class="t" style="left:518.82px;top:149.82px;font-size:12.8px;font-weight:normal;color:#000;transform:scaleX(0.8625);">3.0</span>
<span class="t" style="left:518.71px;top:177.82px;font-size:12.8px;font-weight:normal;color:#000;transform:scaleX(0.8689);">2.5</span>
<span class="t" style="left:518.71px;top:204.82px;font-size:12.8px;font-weight:normal;color:#000;transform:scaleX(0.8689);">2.0</span>
<span class="t" style="left:518.42px;top:232.82px;font-size:12.8px;font-weight:normal;color:#000;transform:scaleX(0.8855);">1.5</span>
<span class="t" style="left:518.42px;top:259.82px;font-size:12.8px;font-weight:normal;color:#000;transform:scaleX(0.8855);">1.0</span>
<span class="t" style="left:518.82px;top:287.82px;font-size:12.8px;font-weight:normal;color:#000;transform:scaleX(0.8625);">0.5</span>
<span class="t" style="left:518.82px;top:314.82px;font-size:12.8px;font-weight:normal;color:#000;transform:scaleX(0.8625);">0.0</span>
<span class="t" style="left:540.13px;top:329.42px;font-size:12.8px;font-weight:normal;color:#000;transform:scaleX(0.9469);">0</span>
<span class="t" style="left:582.64px;top:329.42px;font-size:12.8px;font-weight:normal;color:#000;transform:scaleX(0.8125);">100</span>
<span class="t" style="left:630.05px;top:329.42px;font-size:12.8px;font-weight:normal;color:#000;transform:scaleX(0.8790);">200</span>
<span class="t" style="left:679.16px;top:329.42px;font-size:12.8px;font-weight:normal;color:#000;transform:scaleX(0.8736);">300</span>
<span class="t" style="left:727.38px;top:329.42px;font-size:12.8px;font-weight:normal;color:#000;transform:scaleX(0.8630);">400</span>
<span class="t" style="left:775.16px;top:329.42px;font-size:12.8px;font-weight:normal;color:#000;transform:scaleX(0.8736);">500</span>
<span class="t" style="left:637.11px;top:344.42px;font-size:12.8px;font-weight:normal;color:#000;transform:scaleX(0.8379);">Frequency</span>
<span class="t" style="left:0;top:0;font-size:12.8px;transform-origin:0 0;transform:translate(499.22px,262.80px) rotate(-90deg) scaleX(0.8151);">Amplitude</span>
<span class="t" style="left:491.15px;top:130.42px;font-size:12.8px;font-weight:normal;color:#000;transform:scaleX(0.7957);">Result</span>
<span class="t" style="left:665.54px;top:128.22px;font-size:12.8px;font-weight:normal;color:#000;transform:scaleX(0.8110);">Sine (FFT - (Peak))</span>
<div style="position:absolute;left:766px;top:128px;width:29px;height:17px;background:#000;border:1px solid #d0d0d0;border-top-color:#585858;border-left-color:#585858;box-sizing:border-box;"></div>
<svg style="left:766px;top:128px" width="29" height="17" viewBox="766 128 29 17"><polyline points="768.5,139.5 778.5,131.5 788.5,139.5 793.4,135.8" stroke="#fff" stroke-width="1" fill="none" shape-rendering="crispEdges"/></svg>
</body></html>
